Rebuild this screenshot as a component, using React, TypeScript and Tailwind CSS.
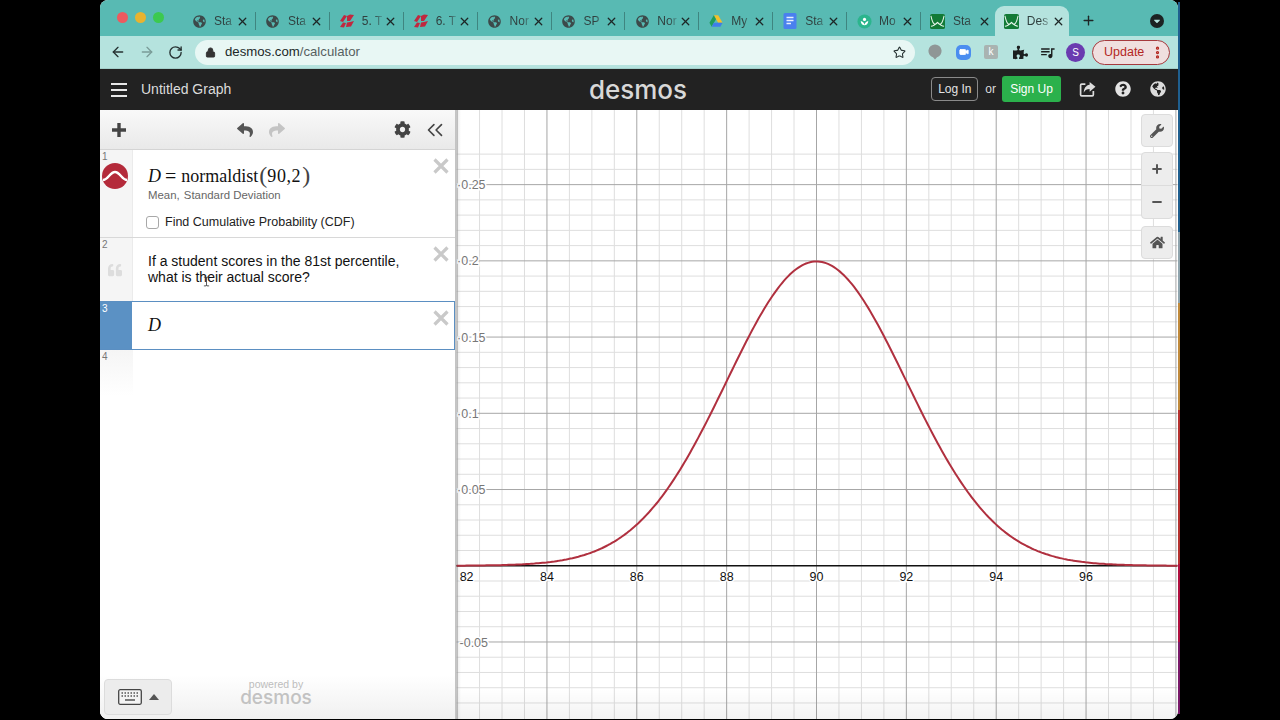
import { ArrowLeft, ArrowRight, RotateCw, Star, Lock, Plus, X, ChevronsLeft, Minus, Video, EllipsisVertical } from 'lucide-react';
import { FaGlobeAmericas, FaPuzzlePiece, FaCog, FaWrench, FaHome, FaQuoteLeft, FaQuestionCircle, FaCaretDown, FaReply, FaShare } from 'react-icons/fa';
import { MdQueueMusic } from 'react-icons/md';

type TabIcon = 'globe' | 'book' | 'drive' | 'docs' | 'moodle' | 'desmos';

const tabs: { icon: TabIcon; title: string; active?: boolean }[] = [
  { icon: 'globe', title: 'Sta' },
  { icon: 'globe', title: 'Sta' },
  { icon: 'book', title: '5. T' },
  { icon: 'book', title: '6. T' },
  { icon: 'globe', title: 'Nor' },
  { icon: 'globe', title: 'SP' },
  { icon: 'globe', title: 'Nor' },
  { icon: 'drive', title: 'My' },
  { icon: 'docs', title: 'Sta' },
  { icon: 'moodle', title: 'Mo' },
  { icon: 'desmos', title: 'Sta' },
  { icon: 'desmos', title: 'Des', active: true },
];

function Favicon({ icon }: { icon: TabIcon }) {
  switch (icon) {
    case 'globe':
      return <FaGlobeAmericas className="w-[13px] h-[13px] text-[#3c4a4a]" />;
    case 'book':
      return (
        <svg viewBox="0 0 16 16" className="w-[16px] h-[16px]">
          <path d="M1 8 L5 2 L8 3 L4 9 Z M8 3 L11 1.5 L15 2 L11 8 L8 8 Z M1 14 L4 9.5 L7 10 L5 14.500 Z M8 9.500 L11 9 L15 8 L12 13.500 L7 14 Z" fill="#c0283f" />
        </svg>
      );
    case 'drive':
      return (
        <svg viewBox="0 0 16 16" className="w-[14px] h-[14px]">
          <path d="M5.500 1.500 H10.500 L15.500 10 H10.500 Z" fill="#f4bf2a" />
          <path d="M5.500 1.500 L8 6 L3 14.500 L0.500 10 Z" fill="#1f9d5a" />
          <path d="M5.500 10 H15.500 L13 14.500 H3 Z" fill="#3f7de8" />
        </svg>
      );
    case 'docs':
      return (
        <svg viewBox="0 0 16 16" className="w-[16px] h-[16px]">
          <rect x="1.500" width="13" height="16" rx="1.500" fill="#4a80ee" />
          <path d="M4.500 4.500 H11.500 M4.500 7.500 H11.500 M4.500 10.500 H9" stroke="#e8f0ff" strokeWidth="1.500" />
        </svg>
      );
    case 'moodle':
      return (
        <svg viewBox="0 0 16 16" className="w-[15px] h-[15px]">
          <circle cx="8" cy="8" r="7.500" fill="#2bb58d" />
          <circle cx="8" cy="5.800" r="1.700" fill="#fff" />
          <path d="M4 7.500 C6 8 7.500 9 8 11.500 C8.500 9 10 8 12 7.500 C12 10.500 10 12 8 12 C6 12 4 10.500 4 7.500 Z" fill="#fff" />
        </svg>
      );
    case 'desmos':
      return (
        <svg viewBox="0 0 16 16" className="w-[15px] h-[15px]">
          <rect width="16" height="16" rx="2" fill="#127a36" />
          <path d="M1 2 C3 11 5 13 8 9 C11 13 13 11 15 2 M1 13 C4 13 6 11 8 9 C10 11 12 13 15 13" stroke="#e8f5ec" strokeWidth="1.100" fill="none" />
        </svg>
      );
  }
}

function Tab({ icon, title, active, last }: { icon: TabIcon; title: string; active?: boolean; last?: boolean }) {
  return (
    <div className={`flex items-center w-[73.900px] h-[30px] pl-[9px] ${active ? 'bg-[#b5e3de] rounded-t-[9px]' : ''}`}>
      <span className="w-[16px] flex justify-center shrink-0">
        <Favicon icon={icon} />
      </span>
      <span className="ml-[7px] w-[23px] overflow-hidden whitespace-nowrap text-[12px] text-[#30403f] [mask-image:linear-gradient(to_right,black_60%,rgba(0,0,0,0.25))]">
        {title}
      </span>
      <X className="w-[13px] h-[13px] ml-[2px] shrink-0 text-[#1d2626]" strokeWidth={2.4} />
      {!active && !last && <span className="ml-[6px] h-[18px] w-px bg-[#3f8580]" />}
    </div>
  );
}

function CloseX() {
  return (
    <svg viewBox="0 0 16 16" className="absolute right-[6px] top-[8px] w-[16px] h-[16px]">
      <path d="M1.500 1.500 L14.500 14.500 M14.500 1.500 L1.500 14.500" stroke="#c9c9c9" strokeWidth="3.200" />
    </svg>
  );
}

function BrowserChrome() {
  return (
    <>
      <div className="h-[36px] bg-[#58bab3] flex items-end shrink-0">
        <div className="w-[82px] h-[36px] flex items-center gap-[7px] pl-[17px] pb-[2px] shrink-0">
          <span className="w-[11px] h-[11px] rounded-full bg-[#ec5a5f]" />
          <span className="w-[11px] h-[11px] rounded-full bg-[#e8b32f]" />
          <span className="w-[11px] h-[11px] rounded-full bg-[#3cc94f]" />
        </div>
        {tabs.map((tab, i) => (
          <Tab key={i} {...tab} last={i === tabs.length - 2} />
        ))}
        <Plus className="w-[15px] h-[15px] ml-[12px] mb-[8px] text-[#1d2626]" strokeWidth={2.2} />
        <span className="ml-[54px] mb-[8px] w-[14px] h-[14px] rounded-full bg-[#1c2323] flex items-center justify-center">
          <FaCaretDown className="w-[10px] h-[10px] text-[#b5e3de]" />
        </span>
      </div>
      <div className="h-[33px] bg-[#b5e3de] flex items-center shrink-0 border-b border-[#a3cfca]">
        <ArrowLeft className="w-[16px] h-[16px] ml-[10px] text-[#263232]" strokeWidth={2} />
        <ArrowRight className="w-[16px] h-[16px] ml-[13px] text-[#7a9c98]" strokeWidth={2} />
        <RotateCw className="w-[15px] h-[15px] ml-[13px] text-[#263232]" strokeWidth={2.2} />
        <div className="ml-[12px] w-[720px] h-[25px] rounded-full bg-[#e8f7f4] flex items-center">
          <Lock className="w-[11px] h-[11px] ml-[10px] text-[#333] fill-[#333]" />
          <span className="ml-[9px] text-[13.200px] text-[#202828]">
            desmos.com<span className="text-[#56605f]">/calculator</span>
          </span>
          <Star className="w-[13px] h-[13px] ml-auto mr-[9px] text-[#263232]" strokeWidth={2} />
        </div>
        <svg viewBox="0 0 14 16" className="ml-[13px] w-[14px] h-[16px]">
          <path d="M7 0.500 A6.500 6.500 0 0 1 9 13.200 L7 15.500 L5 13.200 A6.500 6.500 0 0 1 7 0.500 Z" fill="#8f9696" />
        </svg>
        <span className="ml-[14px] w-[15px] h-[15px] rounded-[5px] bg-[#4a8df0] flex items-center justify-center">
          <Video className="w-[10px] h-[10px] text-white fill-white" />
        </span>
        <span className="ml-[13px] w-[14px] h-[14px] rounded-[2px] bg-[#a9b3b1] text-[10px] leading-[14px] text-center text-white">k</span>
        <FaPuzzlePiece className="ml-[15px] w-[15px] h-[15px] text-[#1b1f1f]" />
        <MdQueueMusic className="ml-[11px] w-[17px] h-[17px] text-[#1b1f1f]" />
        <span className="ml-[10px] w-[19px] h-[19px] rounded-full bg-[#6a3bb0] text-white text-[10px] leading-[19px] text-center">S</span>
        <div className="ml-[7px] w-[78px] h-[25px] rounded-full bg-[#f0dfdf] border border-[#a63a3e] flex items-center pl-[11px] text-[12.500px] text-[#b3261e]">
          Update
          <EllipsisVertical className="w-[15px] h-[15px] ml-[6px] text-[#b3261e]" strokeWidth={3.2} />
        </div>
      </div>
    </>
  );
}

function Header() {
  return (
    <div className="h-[41px] bg-[#222222] grid grid-cols-[1fr_auto_1fr] items-center shrink-0 text-white">
      <div className="flex items-center">
        <div className="ml-[11px] w-[16px] flex flex-col gap-[4px]">
          <span className="h-[2px] bg-[#e8e8e8]" />
          <span className="h-[2px] bg-[#e8e8e8]" />
          <span className="h-[2px] bg-[#e8e8e8]" />
        </div>
        <span className="ml-[14px] text-[14px] text-[#dcdcdc]">Untitled Graph</span>
      </div>
      <span className="font-['Inter',sans-serif] font-medium text-[26px] leading-none text-[#d8d8d8] -translate-x-[1px]">desmos</span>
      <div className="flex items-center justify-end pb-[1px]">
        <div className="w-[47px] h-[24px] rounded-[4px] border border-[#8a8a8a] text-[12px] leading-[22px] text-center text-[#e4e4e4]">Log In</div>
        <span className="ml-[7px] text-[12px] text-[#dcdcdc]">or</span>
        <div className="ml-[6px] w-[59px] h-[26px] rounded-[3px] bg-[#2bb14c] text-[12px] leading-[26px] text-center text-white">Sign Up</div>
        <svg viewBox="0 0 16 16" className="ml-[18px] w-[17px] h-[17px]">
          <path d="M6 3 H2.500 A1 1 0 0 0 1.500 4 V13 A1 1 0 0 0 2.500 14 H12.500 A1 1 0 0 0 13.500 13 V9.500" stroke="#dcdcdc" strokeWidth="1.600" fill="none" />
          <path d="M10 1 L15.500 5.500 L10 10 V7.500 C7.500 7.500 5.500 8.500 4.500 11 C4.500 7 6.500 4 10 3.500 Z" fill="#dcdcdc" />
        </svg>
        <FaQuestionCircle className="ml-[19px] w-[16px] h-[16px] text-[#e4e4e4]" />
        <FaGlobeAmericas className="ml-[19px] mr-[12px] w-[16px] h-[16px] text-[#dcdcdc]" />
      </div>
    </div>
  );
}

function ExpressionPanel() {
  return (
    <div className="w-[356px] shrink-0 flex flex-col bg-white border-r border-[#c4c4c4] z-10">
      <div className="h-[40px] shrink-0 bg-gradient-to-b from-[#f9f9f9] to-[#e9e9e9] border-b border-[#d4d4d4] flex items-center text-[#444]">
        <Plus className="ml-[7px] w-[24px] h-[24px]" strokeWidth={3.4} strokeLinecap="butt" />
        <FaReply className="ml-[103px] w-[22px] h-[16px] text-[#555]" />
        <FaShare className="ml-[10px] w-[22px] h-[16px] text-[#c4c4c4]" />
        <FaCog className="ml-[106px] w-[17px] h-[17px]" />
        <ChevronsLeft className="ml-[11px] w-[26px] h-[26px]" strokeWidth={1.500} />
      </div>

      {/* Row 1: distribution */}
      <div className="h-[88px] shrink-0 flex border-b border-[#d8d8d8] relative">
        <div className="w-[33px] shrink-0 bg-[#f5f5f5] border-r border-[#ebebeb] relative">
          <span className="block pl-[2px] pt-[1px] text-[10px] leading-[11px] text-[#777]">1</span>
          <svg viewBox="0 0 26 26" className="w-[26px] h-[26px] ml-[2px] mt-[1px]">
            <circle cx="13" cy="13" r="13" fill="#b42a3a" />
            <path d="M1 17 C6 17 8 9 13 9 C18 9 20 17 25 17" stroke="#fff" strokeWidth="2.400" fill="none" />
          </svg>
        </div>
        <div className="pl-[15px] pt-[15px]">
          <div className="flex items-center h-[22px] font-['Liberation_Serif',serif] text-[18px] text-[#111] leading-none">
            <i>D</i>
            <span className="ml-[4px] text-[20px]">=</span>
            <span className="ml-[5px] mr-[1px]">normaldist</span>
            <span className="text-[24px] leading-none text-[#444] -translate-y-[1px]">(</span>
            <span className="tracking-[0.6px]">90,2</span>
            <span className="ml-[1px] text-[24px] leading-none text-[#444] -translate-y-[1px]">)</span>
          </div>
          <div className="mt-[1px] text-[11.400px] leading-[14px] text-[#666]">
            Mean, <span className="ml-[1px]">Standard Deviation</span>
          </div>
          <div className="mt-[11px] flex items-center -ml-[2px]">
            <span className="w-[13px] h-[13px] rounded-[3px] border border-[#a8a8a8] bg-white" />
            <span className="ml-[6px] text-[12.500px] text-[#222]">Find Cumulative Probability (CDF)</span>
          </div>
        </div>
        <CloseX />
      </div>

      {/* Row 2: note */}
      <div className="h-[63px] shrink-0 flex relative">
        <div className="w-[33px] shrink-0 bg-[#f5f5f5] border-r border-[#ebebeb]">
          <span className="block pl-[2px] pt-[1px] text-[10px] leading-[11px] text-[#777]">2</span>
          <FaQuoteLeft className="ml-[8px] mt-[13px] w-[14px] h-[14px] text-[#dddddd]" />
        </div>
        <div className="pl-[15px] pt-[15px] text-[14px] leading-[16px] text-[#111]">
          If a student scores in the 81st percentile,
          <br />
          what is their actual score?
        </div>
        <svg viewBox="0 0 8 12" className="absolute left-[103px] top-[38px] w-[7px] h-[11px]">
          <path d="M1 1 H3.500 L4 2 L4.500 1 H7 M4 2 V10 M1 11 H3.500 L4 10 L4.500 11 H7" stroke="#333" strokeWidth="0.900" fill="none" />
        </svg>
        <CloseX />
      </div>

      {/* Row 3: focused */}
      <div className="h-[49px] shrink-0 flex relative border-y border-[#5b8fc2]">
        <div className="w-[32px] shrink-0 bg-[#5b91c4]">
          <span className="block pl-[2px] pt-px text-[10px] leading-[11px] text-white">3</span>
        </div>
        <div className="flex-1 pl-[16px] flex items-center border-r border-[#5b8fc2]">
          <i className="font-['Liberation_Serif',serif] text-[18px] text-[#111]">D</i>
        </div>
        <CloseX />
      </div>

      {/* Row 4: empty */}
      <div className="h-[46px] shrink-0 w-[33px] bg-gradient-to-b from-[#f5f5f5] to-white">
        <span className="block pl-[2px] pt-px text-[10px] leading-[11px] text-[#777]">4</span>
      </div>

      <div className="mt-auto h-[44px] px-[4px] pb-[4px] grid grid-cols-3 items-end bg-gradient-to-b from-white to-[#f0f0f0]">
        <div className="w-[68px] h-[36px] rounded-[4px] bg-[#ececec] border border-[#dcdcdc] flex items-center pl-[13px]">
          <svg viewBox="0 0 24 16" className="w-[24px] h-[16px]">
            <rect x="0.700" y="0.700" width="22.600" height="14.600" rx="1.500" fill="#f4f4f4" stroke="#444" strokeWidth="1.300" />
            <path d="M3.500 4 H20.500 M3.500 7 H20.500" stroke="#555" strokeWidth="1.400" strokeDasharray="1.500 1.500" />
            <path d="M7 11 H17" stroke="#555" strokeWidth="1.500" />
          </svg>
          <span className="ml-[7px] w-0 h-0 border-x-[5.500px] border-x-transparent border-b-[6px] border-b-[#555]" />
        </div>
        <div className="ml-[-3px] flex flex-col items-center text-[#c2c2c2] pb-[10.500px]">
          <span className="text-[10.500px] leading-[10px] text-[#bdbdbd]">powered by</span>
          <span className="mt-[2px] font-['Inter',sans-serif] font-medium text-[19px] leading-[14px]">desmos</span>
        </div>
      </div>
    </div>
  );
}

const X0 = 816.5;
const Y0 = 566.5;
const xLines = Array.from({ length: 33 }, (_, i) => i - 16);
const yLines = Array.from({ length: 40 }, (_, i) => i - 27);
const xLabels = [84, 86, 88, 90, 92, 94, 96];
const yLabels = ['0.25', '0.2', '0.15', '0.1', '0.05'];

const curve = Array.from({ length: 362 }, (_, i) => {
  const px = 456 + i * 2;
  const u = 90 + (px - X0) / 45;
  const pdf = Math.exp(-((u - 90) ** 2) / 8) / (2 * Math.sqrt(2 * Math.PI));
  return `${px},${(Y0 - pdf * 1528).toFixed(1)}`;
}).join(' ');

function GraphPane() {
  return (
    <div className="flex-1 relative overflow-hidden bg-white">
      <svg viewBox="456 110 722 610" className="block w-full h-full font-['Liberation_Sans',sans-serif]">
        {xLines.filter((k) => k % 4 !== 0).map((k) => (
          <line key={k} x1={X0 + k * 22.5} x2={X0 + k * 22.5} y1="110" y2="720" stroke="#dedede" />
        ))}
        {yLines.filter((k) => k % 5 !== 0).map((k) => (
          <line key={k} x1="456" x2="1178" y1={Y0 + k * 15.27} y2={Y0 + k * 15.27} stroke="#dedede" />
        ))}
        {xLines.filter((k) => k % 4 === 0).map((k) => (
          <line key={k} x1={X0 + k * 22.5} x2={X0 + k * 22.5} y1="110" y2="720" stroke="#a6a6a6" />
        ))}
        {[-1, 1, 2, 3, 4, 5].map((k) => (
          <line key={k} x1="456" x2="1178" y1={Y0 - k * 76.35} y2={Y0 - k * 76.35} stroke="#a6a6a6" />
        ))}
        <line x1="456" x2="1178" y1={Y0} y2={Y0} stroke="#111" strokeWidth="1.300" />
        <polyline points={curve} fill="none" stroke="#b0303f" strokeWidth="2" />
        <text x="466" y="582" textAnchor="middle" fontSize="12.500" fill="#111" stroke="#fff" strokeWidth="3" paintOrder="stroke">
          82
        </text>
        {xLabels.map((v) => (
          <text key={v} x={X0 + (v - 90) * 45} y="582" textAnchor="middle" fontSize="12.500" fill="#111" stroke="#fff" strokeWidth="3" paintOrder="stroke">
            {v}
          </text>
        ))}
        {yLabels.map((v, i) => (
          <text key={v} x="456.500" y={Y0 - (5 - i) * 76.35 + 4.5} fontSize="12.500" fill="#777" stroke="#fff" strokeWidth="3" paintOrder="stroke">
            ·{v}
          </text>
        ))}
        <text x="459" y={Y0 + 76.35 + 5} fontSize="12.500" fill="#777" stroke="#fff" strokeWidth="3" paintOrder="stroke">
          -0.05
        </text>
      </svg>

      <div className="absolute right-[5px] top-[4px] w-[32px] flex flex-col gap-[5px] text-[#555]">
        <div className="h-[33px] rounded-[4px] bg-[#ededed] border border-[#dcdcdc] flex items-center justify-center">
          <FaWrench className="w-[14px] h-[14px]" />
        </div>
        <div className="h-[67px] rounded-[4px] bg-[#ededed] border border-[#dcdcdc] flex flex-col">
          <div className="flex-1 flex items-center justify-center border-b border-[#dcdcdc]">
            <Plus className="w-[16px] h-[16px]" strokeWidth={3} strokeLinecap="butt" />
          </div>
          <div className="flex-1 flex items-center justify-center">
            <Minus className="w-[16px] h-[16px]" strokeWidth={3} strokeLinecap="butt" />
          </div>
        </div>
        <div className="h-[33px] mt-[2px] rounded-[4px] bg-[#ededed] border border-[#dcdcdc] flex items-center justify-center">
          <FaHome className="w-[15px] h-[15px]" />
        </div>
      </div>

      <div className="absolute inset-x-0 bottom-0 h-[30px] bg-gradient-to-b from-transparent to-black/5" />
      <div className="absolute inset-y-0 left-0 w-[5px] bg-gradient-to-r from-black/10 to-transparent" />
    </div>
  );
}

export default function App() {
  return (
    <div className="w-[1280px] h-[720px] bg-black flex overflow-hidden font-['Liberation_Sans',sans-serif]">
      <div className="ml-[100px] w-[1078px] h-[719px] rounded-[8px] overflow-hidden flex flex-col bg-white">
        <BrowserChrome />
        <Header />
        <div className="flex-1 min-h-0 flex">
          <ExpressionPanel />
          <GraphPane />
        </div>
      </div>
      <div className="w-[2px] h-[712px] mt-[2px] flex flex-col">
        <div className="h-[230px] bg-[#1f5f8f]" />
        <div className="h-[71px] bg-[#8fa4ad]" />
        <div className="h-[107px] bg-[#c08a3c]" />
        <div className="h-[154px] bg-[#b5322f]" />
        <div className="h-[78px] bg-[#b01040]" />
        <div className="flex-1 bg-[#7a1a6a]" />
      </div>
    </div>
  );
}
